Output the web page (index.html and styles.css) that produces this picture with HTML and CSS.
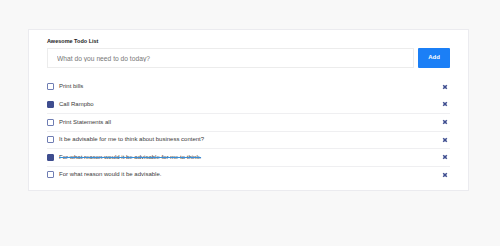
FILE: index.html
```html
<!DOCTYPE html>
<html lang="en">
  <head>
    <meta charset="UTF-8" />
    <meta name="viewport" content="width=device-width, initial-scale=1.0" />
    <title>Awesome Todo List</title>
    <link rel="stylesheet" href="styles.css">
  </head>
  <body>
    <main class="card">
      <h1>Awesome Todo List</h1>

      <form class="add">
        <input type="text" placeholder="What do you need to do today?" aria-label="New todo" />
        <button type="submit">Add</button>
      </form>

      <ul class="todos">
        <li>
          <span class="check"></span>
          <p>Print bills</p>
          <button class="remove" aria-label="Remove"><svg viewBox="0 0 10 10"><path d="M2 2l6 6M8 2l-6 6" /></svg></button>
        </li>
        <li class="done">
          <span class="check"></span>
          <p>Call Rampbo</p>
          <button class="remove" aria-label="Remove"><svg viewBox="0 0 10 10"><path d="M2 2l6 6M8 2l-6 6" /></svg></button>
        </li>
        <li>
          <span class="check"></span>
          <p>Print Statements all</p>
          <button class="remove" aria-label="Remove"><svg viewBox="0 0 10 10"><path d="M2 2l6 6M8 2l-6 6" /></svg></button>
        </li>
        <li>
          <span class="check"></span>
          <p>It be advisable for me to think about business content?</p>
          <button class="remove" aria-label="Remove"><svg viewBox="0 0 10 10"><path d="M2 2l6 6M8 2l-6 6" /></svg></button>
        </li>
        <li class="done strike">
          <span class="check"></span>
          <p>For what reason would it be advisable for me to think.</p>
          <button class="remove" aria-label="Remove"><svg viewBox="0 0 10 10"><path d="M2 2l6 6M8 2l-6 6" /></svg></button>
        </li>
        <li>
          <span class="check"></span>
          <p>For what reason would it be advisable.</p>
          <button class="remove" aria-label="Remove"><svg viewBox="0 0 10 10"><path d="M2 2l6 6M8 2l-6 6" /></svg></button>
        </li>
      </ul>
    </main>
  </body>
</html>
```

FILE: styles.css
```css
/* Global styles */
* {
  margin: 0;
  padding: 0;
  box-sizing: border-box;
}
body {
  color: #3a3a3a;
  font: 6px/1.2 "Liberation Sans", Arial, sans-serif;
  background-color: #f8f8f8;
}
button {
  border: none;
  font: inherit;
  color: inherit;
  background: none;
}

/* Card */
.card {
  width: 441px;
  margin: 29px 0 0 28px;
  padding: 7px 18px 7px;
  background-color: #fff;
  border: 1px solid #ebebef;
}
.card h1 {
  font-size: 5.5px;
  font-weight: 700;
  line-height: 9px;
  color: #222;
}

/*
  [1] Add form
*/
.add {
  gap: 4px;
  display: flex;
  margin-top: 2px;
}
.add input {
  flex: 1;
  height: 20px;
  padding-left: 9px;
  border: 1px solid #ececec;
  font: 6.7px "Liberation Sans", Arial, sans-serif;
  color: #333;
  outline: none;
}
.add input::placeholder {
  color: #777;
}
.add button {
  width: 32px;
  height: 20px;
  font-weight: 700;
  color: #fff;
  border-radius: 1px;
  background-color: #1b7ff6;
}

/*
  [2] Todo list
*/
.todos {
  list-style: none;
  margin-top: 10px;
}
.todos li {
  gap: 5px;
  height: 17.5px;
  display: flex;
  align-items: center;
}
.todos li:nth-child(n + 3) {
  border-top: 1px solid #efeff1;
}
.todos p {
  flex: 1;
}
.check {
  width: 7px;
  height: 7px;
  border-radius: 1px;
  border: 1px solid #6f7db3;
}
.done .check {
  border-color: #3e4d8f;
  background-color: #3e4d8f;
}
.strike p {
  text-decoration: line-through;
  text-decoration-color: #3b8fd6;
}
.remove {
  width: 6px;
  height: 6px;
  margin-right: 2px;
  display: grid;
}
.remove svg {
  width: 6px;
  height: 6px;
  fill: none;
  stroke: #3e4d8f;
  stroke-width: 2.6;
}
```
